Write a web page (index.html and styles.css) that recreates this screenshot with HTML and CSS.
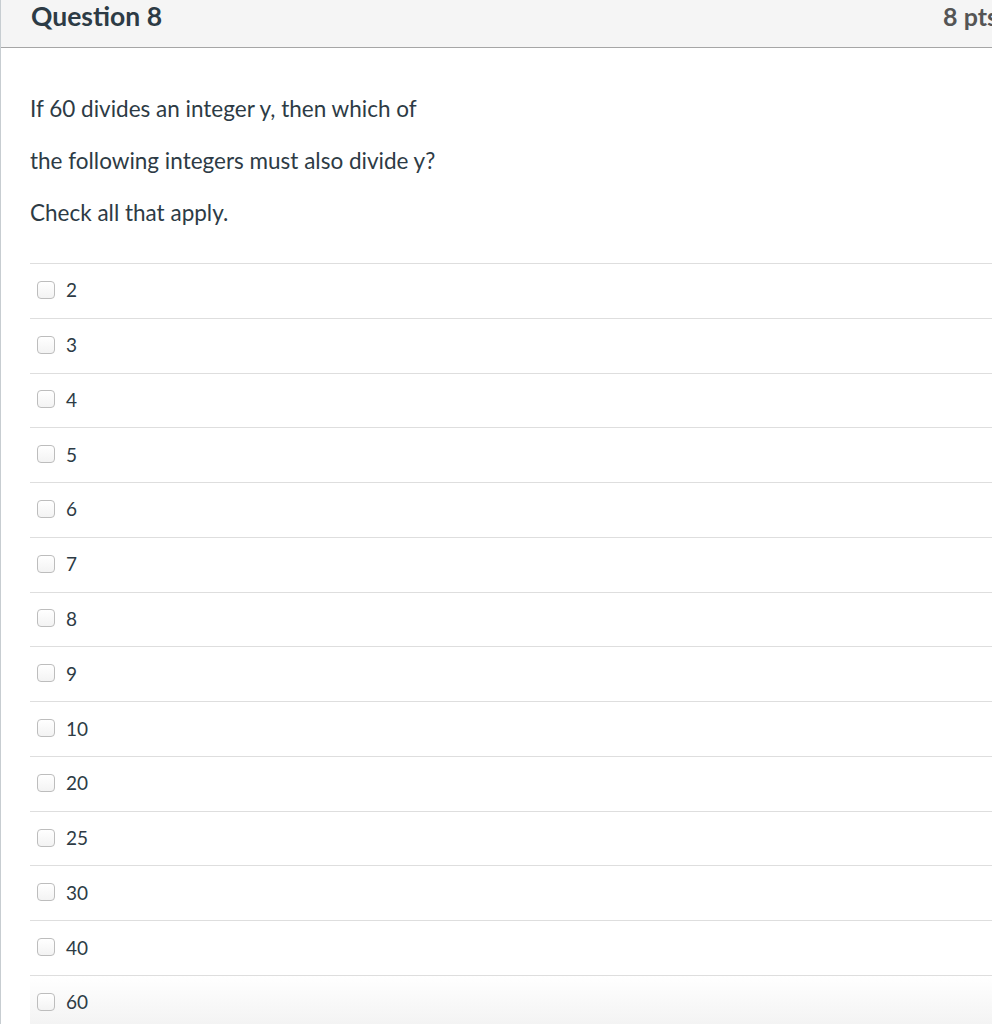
FILE: index.html
```html
<!DOCTYPE html>
<html>
<head>
<meta charset="utf-8">
<link rel="stylesheet" href="styles.css">
</head>
<body>
<div class="question">
  <div class="header">
    <span class="title">Question 8</span>
    <span class="pts">8 pts</span>
  </div>
  <div class="content">
    <div class="text">
      <p>If 60 divides an integer y, then which of</p>
      <p>the following integers must also divide y?</p>
      <p>Check all that apply.</p>
    </div>
    <div class="answers">
      <label class="answer"><span class="box"></span><span class="val">2</span></label>
      <label class="answer"><span class="box"></span><span class="val">3</span></label>
      <label class="answer"><span class="box"></span><span class="val">4</span></label>
      <label class="answer"><span class="box"></span><span class="val">5</span></label>
      <label class="answer"><span class="box"></span><span class="val">6</span></label>
      <label class="answer"><span class="box"></span><span class="val">7</span></label>
      <label class="answer"><span class="box"></span><span class="val">8</span></label>
      <label class="answer"><span class="box"></span><span class="val">9</span></label>
      <label class="answer"><span class="box"></span><span class="val">10</span></label>
      <label class="answer"><span class="box"></span><span class="val">20</span></label>
      <label class="answer"><span class="box"></span><span class="val">25</span></label>
      <label class="answer"><span class="box"></span><span class="val">30</span></label>
      <label class="answer"><span class="box"></span><span class="val">40</span></label>
      <label class="answer hover"><span class="box"></span><span class="val">60</span></label>
    </div>
  </div>
</div>
</body>
</html>
```
FILE: styles.css
```css
html, body {
  margin: 0;
  padding: 0;
  background: #fff;
  overflow: hidden;
}
body {
  font-family: Lato, "Open Sans", sans-serif;
  color: #2d3b45;
}
.question {
  width: 1030px;
  border-left: 1px solid #c7cdd1;
  min-height: 1024px;
  box-sizing: border-box;
}
.header {
  height: 47px;
  background: #f5f5f5;
  border-bottom: 1px solid #a6a6a6;
  display: flex;
  justify-content: space-between;
  align-items: center;
  padding: 0 32px 0 30px;
  box-sizing: content-box;
}
.title {
  font-size: 26.5px;
  font-weight: 700;
  color: #2d3b45;
  margin-top: -16px;
}
.pts {
  font-size: 25px;
  font-weight: 700;
  color: #555;
  margin-top: -16px;
}
.content {
  padding: 0 0 0 29px;
}
.text {
  padding-top: 35px;
  font-size: 22.5px;
  line-height: 52px;
  padding-bottom: 24px;
}
.text p {
  margin: 0;
}
.answers {
  display: flex;
  flex-direction: column;
}
.answer {
  display: flex;
  align-items: center;
  height: 54.77px;
  box-sizing: border-box;
  border-top: 1px solid #dedede;
  padding-left: 7px;
  padding-bottom: 2px;
  font-size: 19px;
}
.answer.hover {
  background: linear-gradient(#ffffff, #f2f2f2);
}
.box {
  width: 16px;
  height: 16px;
  border: 1px solid #bdbdbd;
  border-radius: 4px;
  background: linear-gradient(#fff, #f3f3f3);
  margin-right: 11px;
  flex: none;
}
.val {
  color: #2d3b45;
}
```
